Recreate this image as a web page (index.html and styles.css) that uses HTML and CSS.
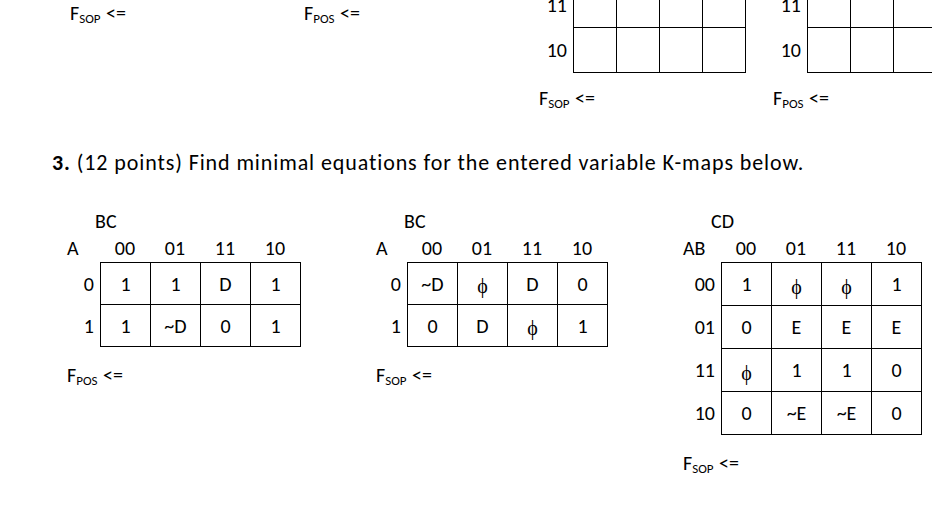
FILE: index.html
```html
<!DOCTYPE html>
<html lang="en">
<head>
<meta charset="utf-8">
<title>K-maps</title>
<link rel="stylesheet" href="styles.css">
</head>
<body>
<div class="page">
  <section class="prev">
    <div class="pblk pblk-left">
      <div class="eq">F<span class="sub">SOP</span> &lt;=</div>
    </div>
    <div class="pblk pblk-left pblk-wide">
      <div class="eq">F<span class="sub">POS</span> &lt;=</div>
    </div>
    <div class="pblk">
      <div class="kbody">
        <div class="rlabels">
          <div class="rl">11</div>
          <div class="rl">10</div>
        </div>
        <div class="cells">
          <div class="c"></div><div class="c"></div><div class="c"></div><div class="c"></div>
          <div class="c"></div><div class="c"></div><div class="c"></div><div class="c"></div>
        </div>
      </div>
      <div class="eq">F<span class="sub">SOP</span> &lt;=</div>
    </div>
    <div class="pblk">
      <div class="kbody">
        <div class="rlabels">
          <div class="rl">11</div>
          <div class="rl">10</div>
        </div>
        <div class="cells">
          <div class="c"></div><div class="c"></div><div class="c"></div><div class="c"></div>
          <div class="c"></div><div class="c"></div><div class="c"></div><div class="c"></div>
        </div>
      </div>
      <div class="eq">F<span class="sub">POS</span> &lt;=</div>
    </div>
  </section>

  <h2 class="question"><b>3.</b> (12 points) Find minimal equations for the entered variable K-maps below.</h2>

  <section class="maps">
    <div class="blk blk-a">
      <div class="var">BC</div>
      <div class="head">
        <div class="corner">A</div>
        <div class="ch">00</div><div class="ch">01</div><div class="ch">11</div><div class="ch">10</div>
      </div>
      <div class="kbody">
        <div class="rlabels">
          <div class="rl">0</div>
          <div class="rl">1</div>
        </div>
        <div class="cells">
          <div class="c">1</div><div class="c">1</div><div class="c">D</div><div class="c">1</div>
          <div class="c">1</div><div class="c">~D</div><div class="c">0</div><div class="c">1</div>
        </div>
      </div>
      <div class="eq">F<span class="sub">POS</span> &lt;=</div>
    </div>

    <div class="blk blk-b">
      <div class="var">BC</div>
      <div class="head">
        <div class="corner">A</div>
        <div class="ch">00</div><div class="ch">01</div><div class="ch">11</div><div class="ch">10</div>
      </div>
      <div class="kbody">
        <div class="rlabels">
          <div class="rl">0</div>
          <div class="rl">1</div>
        </div>
        <div class="cells">
          <div class="c">~D</div><div class="c"><span class="phi">ϕ</span></div><div class="c">D</div><div class="c">0</div>
          <div class="c">0</div><div class="c">D</div><div class="c"><span class="phi">ϕ</span></div><div class="c">1</div>
        </div>
      </div>
      <div class="eq">F<span class="sub">SOP</span> &lt;=</div>
    </div>

    <div class="blk blk-c">
      <div class="var">CD</div>
      <div class="head">
        <div class="corner">AB</div>
        <div class="ch">00</div><div class="ch">01</div><div class="ch">11</div><div class="ch">10</div>
      </div>
      <div class="kbody">
        <div class="rlabels">
          <div class="rl">00</div>
          <div class="rl">01</div>
          <div class="rl">11</div>
          <div class="rl">10</div>
        </div>
        <div class="cells">
          <div class="c">1</div><div class="c"><span class="phi">ϕ</span></div><div class="c"><span class="phi">ϕ</span></div><div class="c">1</div>
          <div class="c">0</div><div class="c">E</div><div class="c">E</div><div class="c">E</div>
          <div class="c"><span class="phi">ϕ</span></div><div class="c">1</div><div class="c">1</div><div class="c">0</div>
          <div class="c">0</div><div class="c">~E</div><div class="c">~E</div><div class="c">0</div>
        </div>
      </div>
      <div class="eq">F<span class="sub">SOP</span> &lt;=</div>
    </div>
  </section>
</div>
</body>
</html>
```

FILE: styles.css
```css
html, body {
  margin: 0;
  padding: 0;
  background: #fff;
  overflow: hidden;
}

body {
  font-family: Carlito, Lato, "Open Sans", sans-serif;
  color: #000;
  font-size: 20px;
}

.page {
  width: 932px;
  height: 525px;
  overflow: hidden;
}

/* ---------- equation label ---------- */
.eq {
  line-height: 20px;
  height: 20px;
  margin-top: 15px;
  white-space: nowrap;
}

.sub {
  font-size: 13px;
  vertical-align: -3px;
  margin-right: 1px;
}

/* ---------- previous problem (cut off at top) ---------- */
.prev {
  display: flex;
  margin-top: -18px;
  padding-left: 70px;
}

.pblk {
  width: 234px;
  flex: none;
}

.pblk-wide {
  width: 235px;
}

.pblk-left .eq {
  margin-top: 21px;
}

.prev .rlabels {
  width: 34px;
}

.prev .rl {
  height: 45px;
  line-height: 45px;
}

.prev .cells {
  grid-template-columns: repeat(4, 43px);
  grid-auto-rows: 45px;
}

/* ---------- question heading ---------- */
.question {
  margin: 43px 0 0 52px;
  font-size: 22px;
  line-height: 24px;
  font-weight: normal;
  letter-spacing: 0.9px;
  white-space: nowrap;
}

.question b {
  font-weight: bold;
}

/* ---------- K-maps ---------- */
.maps {
  display: flex;
  gap: 75px;
  padding-left: 67px;
  margin-top: 35px;
}

.blk {
  flex: none;
}

.var {
  line-height: 22px;
  padding-left: 28px;
}

.head {
  display: flex;
  height: 22px;
  line-height: 22px;
  margin-top: 5px;
  margin-bottom: 3px;
}

.ch {
  width: 50px;
  text-align: center;
}

.kbody {
  display: flex;
}

.rlabels {
  display: flex;
  flex-direction: column;
  padding-top: 1px;
}

.rl {
  text-align: right;
  padding-right: 6px;
  height: 43px;
  line-height: 43px;
  box-sizing: border-box;
}

.cells {
  display: grid;
  grid-template-columns: repeat(4, 50px);
  grid-auto-rows: 43px;
  border-top: 1px solid #000;
  border-left: 1px solid #000;
}

.c {
  box-sizing: border-box;
  border-right: 1px solid #000;
  border-bottom: 1px solid #000;
  display: flex;
  align-items: center;
  justify-content: center;
}

.blk-a .corner,
.blk-a .rlabels { width: 33px; }
.blk-b .corner,
.blk-b .rlabels { width: 31px; }
.blk-c .corner,
.blk-c .rlabels { width: 38px; }

.corner {
  flex: none;
}

.blk-a .cells,
.blk-b .cells { grid-auto-rows: 42px; }
.blk-a .rl,
.blk-b .rl { height: 42px; line-height: 42px; }

.maps .eq {
  margin-top: 18px;
}

.phi {
  font-family: "Liberation Serif", "DejaVu Serif", serif;
  font-size: 20px;
  position: relative;
  top: 3px;
}
```
